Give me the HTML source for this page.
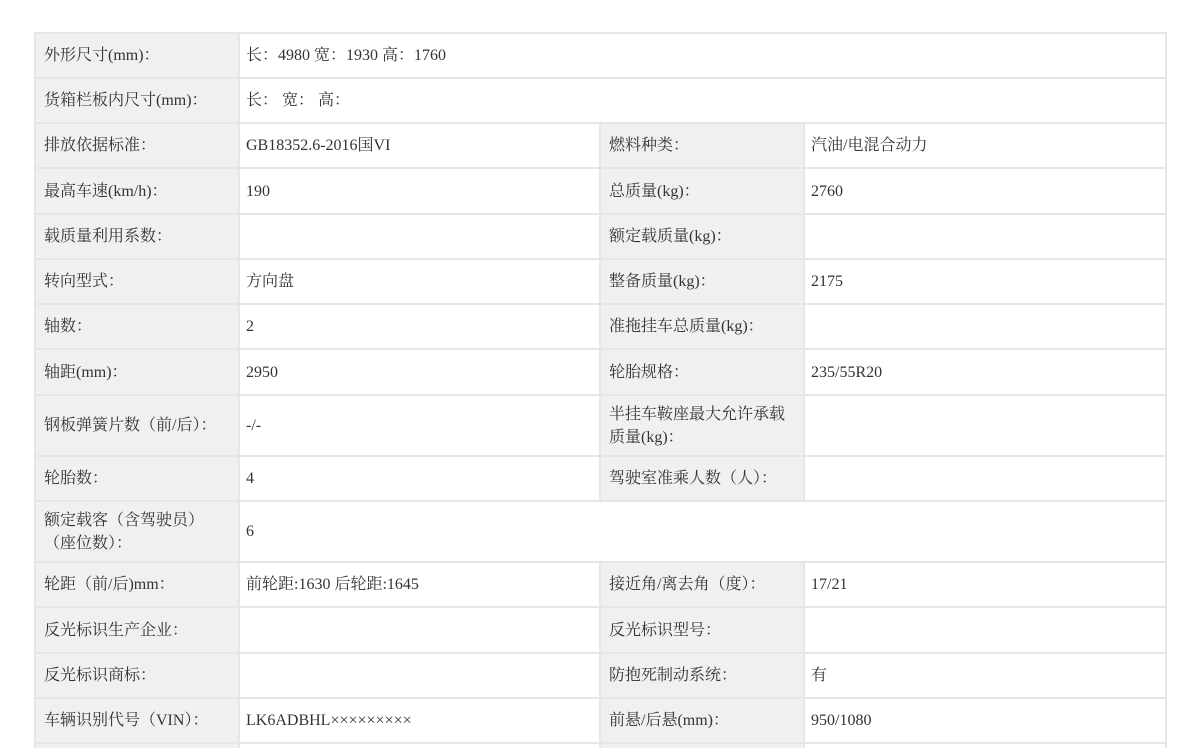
<!DOCTYPE html>
<html><head><meta charset="utf-8"><style>
html,body{margin:0;width:1200px;height:748px;overflow:hidden}
body{background:#fff;position:relative;font-family:"Liberation Serif","Noto Serif CJK SC",serif;font-size:16px;color:#333}
.t{position:absolute;left:34px;top:32px;width:1133px;height:730px;background:#e6e6e6}
.c{position:absolute;display:flex;align-items:center;padding-left:8px;box-sizing:border-box;line-height:23px}
.l{background:#f0f0f0}
.v{background:#fff}
.a{left:36px;width:202px}
.b{left:240px;width:359px;padding-left:6px}
.d{left:601px;width:202px}
.e{left:805px;width:360px;padding-left:6px}
.f{left:240px;width:925px;padding-left:6px}
</style></head><body>
<div class="t"></div>
<div class="c l a" style="top:34px;height:43px">外形尺寸(mm)：</div><div class="c v f" style="top:34px;height:43px">长：4980 宽：1930 高：1760</div>
<div class="c l a" style="top:79px;height:43px">货箱栏板内尺寸(mm)：</div><div class="c v f" style="top:79px;height:43px">长：&nbsp;宽：&nbsp;高：</div>
<div class="c l a" style="top:124px;height:43px">排放依据标准：</div><div class="c v b" style="top:124px;height:43px">GB18352.6-2016国VI</div><div class="c l d" style="top:124px;height:43px">燃料种类：</div><div class="c v e" style="top:124px;height:43px">汽油/电混合动力</div>
<div class="c l a" style="top:169px;height:44px">最高车速(km/h)：</div><div class="c v b" style="top:169px;height:44px">190</div><div class="c l d" style="top:169px;height:44px">总质量(kg)：</div><div class="c v e" style="top:169px;height:44px">2760</div>
<div class="c l a" style="top:215px;height:43px">载质量利用系数：</div><div class="c v b" style="top:215px;height:43px"></div><div class="c l d" style="top:215px;height:43px">额定载质量(kg)：</div><div class="c v e" style="top:215px;height:43px"></div>
<div class="c l a" style="top:260px;height:43px">转向型式：</div><div class="c v b" style="top:260px;height:43px">方向盘</div><div class="c l d" style="top:260px;height:43px">整备质量(kg)：</div><div class="c v e" style="top:260px;height:43px">2175</div>
<div class="c l a" style="top:305px;height:43px">轴数：</div><div class="c v b" style="top:305px;height:43px">2</div><div class="c l d" style="top:305px;height:43px">准拖挂车总质量(kg)：</div><div class="c v e" style="top:305px;height:43px"></div>
<div class="c l a" style="top:350px;height:44px">轴距(mm)：</div><div class="c v b" style="top:350px;height:44px">2950</div><div class="c l d" style="top:350px;height:44px">轮胎规格：</div><div class="c v e" style="top:350px;height:44px">235/55R20</div>
<div class="c l a" style="top:396px;height:59px">钢板弹簧片数（前/后）：</div><div class="c v b" style="top:396px;height:59px">-/-</div><div class="c l d" style="top:396px;height:59px">半挂车鞍座最大允许承载<br>质量(kg)：</div><div class="c v e" style="top:396px;height:59px"></div>
<div class="c l a" style="top:457px;height:43px">轮胎数：</div><div class="c v b" style="top:457px;height:43px">4</div><div class="c l d" style="top:457px;height:43px">驾驶室准乘人数（人）：</div><div class="c v e" style="top:457px;height:43px"></div>
<div class="c l a" style="top:502px;height:59px">额定载客（含驾驶员）<br>（座位数）：</div><div class="c v f" style="top:502px;height:59px">6</div>
<div class="c l a" style="top:563px;height:43px">轮距（前/后)mm：</div><div class="c v b" style="top:563px;height:43px">前轮距:1630 后轮距:1645</div><div class="c l d" style="top:563px;height:43px">接近角/离去角（度）：</div><div class="c v e" style="top:563px;height:43px">17/21</div>
<div class="c l a" style="top:608px;height:44px">反光标识生产企业：</div><div class="c v b" style="top:608px;height:44px"></div><div class="c l d" style="top:608px;height:44px">反光标识型号：</div><div class="c v e" style="top:608px;height:44px"></div>
<div class="c l a" style="top:654px;height:43px">反光标识商标：</div><div class="c v b" style="top:654px;height:43px"></div><div class="c l d" style="top:654px;height:43px">防抱死制动系统：</div><div class="c v e" style="top:654px;height:43px">有</div>
<div class="c l a" style="top:699px;height:43px">车辆识别代号（VIN）：</div><div class="c v b" style="top:699px;height:43px">LK6ADBHL×××××××××</div><div class="c l d" style="top:699px;height:43px">前悬/后悬(mm)：</div><div class="c v e" style="top:699px;height:43px">950/1080</div>
<div class="c l a" style="top:744px;height:20px"></div><div class="c v b" style="top:744px;height:20px"></div><div class="c l d" style="top:744px;height:20px"></div><div class="c v e" style="top:744px;height:20px"></div>
</body></html>
